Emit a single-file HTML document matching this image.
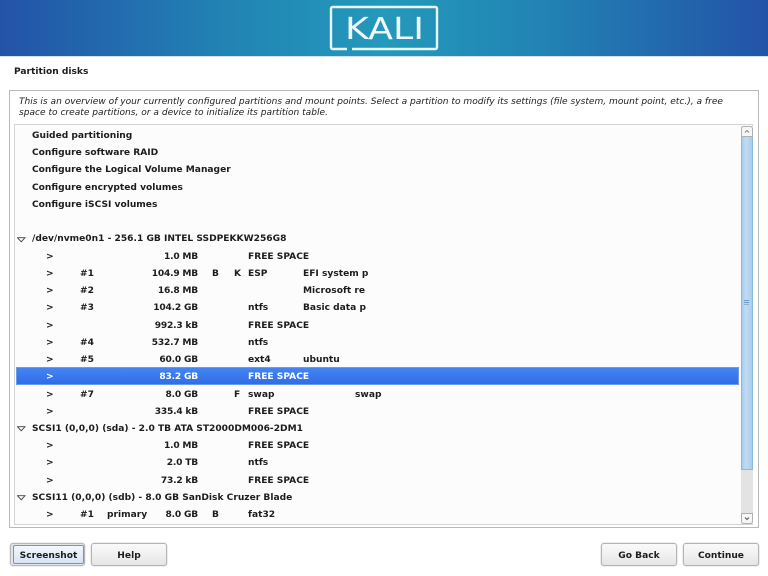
<!DOCTYPE html>
<html><head><meta charset="utf-8">
<style>
html,body{margin:0;padding:0}
body{width:768px;height:576px;overflow:hidden;background:#fff;position:relative;font-family:"DejaVu Sans",sans-serif;color:#1a1a1a}
#p{position:absolute;left:0;top:0;width:768px;height:576px;overflow:hidden;filter:blur(.35px)}
.b{position:absolute}
.r{position:absolute;left:16px;width:723px;height:17px;font-size:9.1px;font-weight:bold;line-height:17px;white-space:pre;color:#1c1c1c;margin-top:1.500px}
.r span{position:absolute;top:0}
.s{left:0;width:182px;text-align:right;letter-spacing:-.2px}
.a{left:30px}.n{left:64px}.f{left:232px}.m{left:287px}.x{left:339px}.t{left:16px}
.tri{position:absolute;left:1px;top:5.500px}
.btn{position:absolute;top:543px;height:23px;box-sizing:border-box;border:1px solid #b4b4b4;border-radius:3px;background:linear-gradient(#fafafa,#e6e6e6);text-align:center;font-size:9.1px;font-weight:bold;line-height:24px;color:#1c1c1c;box-shadow:0 0 0 .5px #ddd}
</style></head><body><div id="p">
<div class="b" style="left:0;top:0;width:768px;height:56px;background:linear-gradient(90deg,#2353a8 0%,#2284b4 30%,#2399bb 50%,#2284b4 70%,#2353a8 100%)"></div>
<div class="b" style="left:0;top:56px;width:768px;height:1px;background:#cfe0ee"></div>
<svg class="b" style="left:325px;top:2px" width="118" height="52" viewBox="0 0 118 52">
<path d="M22 47H7.500a1.500 1.500 0 0 1-1.500-1.500V6.500A1.500 1.500 0 0 1 7.500 5H110.500a1.500 1.500 0 0 1 1.500 1.500V45.500a1.500 1.500 0 0 1-1.500 1.500H27" fill="none" stroke="#e9f4f8" stroke-width="2.400"/>
<text x="20" y="37" font-family="DejaVu Sans,sans-serif" font-size="30" fill="#f2f8fa" textLength="79" lengthAdjust="spacingAndGlyphs">KALI</text>
</svg>

<div class="b" style="left:14px;top:66px;font-size:9.1px;font-weight:bold;line-height:12px;color:#1c1c1c">Partition disks</div>

<div class="b" style="left:9px;top:90px;width:750px;height:438px;box-sizing:border-box;border:1px solid #b8b8b8;background:#fff"></div>
<div class="b" style="left:19px;top:96.500px;font-size:9.07px;font-style:oblique;line-height:11.500px;color:#222;white-space:pre">This is an overview of your currently configured partitions and mount points. Select a partition to modify its settings (file system, mount point, etc.), a free
space to create partitions, or a device to initialize its partition table.</div>

<div class="b" style="left:14px;top:124px;width:739px;height:401px;box-sizing:border-box;border:1px solid #d4d4d4;background:#fcfcfc"></div>
<div class="b" style="left:16px;top:367px;width:723px;height:18px;box-sizing:border-box;background:linear-gradient(#4585f0,#2f6de8);border:1px solid #6a9ae8"></div>

<div class="r" style="top:126px"><span class="t">Guided partitioning</span></div>
<div class="r" style="top:143px"><span class="t">Configure software RAID</span></div>
<div class="r" style="top:160.500px"><span class="t">Configure the Logical Volume Manager</span></div>
<div class="r" style="top:178px"><span class="t">Configure encrypted volumes</span></div>
<div class="r" style="top:195px"><span class="t">Configure iSCSI volumes</span></div>

<div class="r" style="top:229.500px"><svg class="tri" width="10" height="7"><path d="M.5 .7H8L4.250 4.800Z" fill="none" stroke="#444" stroke-width=".9"/></svg><span class="t">/dev/nvme0n1 - 256.1 GB INTEL SSDPEKKW256G8</span></div>
<div class="r" style="top:247px"><span class="a">&gt;</span><span class="s">1.0 MB</span><span class="f">FREE SPACE</span></div>
<div class="r" style="top:264px"><span class="a">&gt;</span><span class="n">#1</span><span class="s">104.9 MB</span><span style="left:196px">B</span><span style="left:218px">K</span><span class="f">ESP</span><span class="m">EFI system p</span></div>
<div class="r" style="top:281.500px"><span class="a">&gt;</span><span class="n">#2</span><span class="s">16.8 MB</span><span class="m">Microsoft re</span></div>
<div class="r" style="top:298.500px"><span class="a">&gt;</span><span class="n">#3</span><span class="s">104.2 GB</span><span class="f">ntfs</span><span class="m">Basic data p</span></div>
<div class="r" style="top:316px"><span class="a">&gt;</span><span class="s">992.3 kB</span><span class="f">FREE SPACE</span></div>
<div class="r" style="top:333px"><span class="a">&gt;</span><span class="n">#4</span><span class="s">532.7 MB</span><span class="f">ntfs</span></div>
<div class="r" style="top:350.500px"><span class="a">&gt;</span><span class="n">#5</span><span class="s">60.0 GB</span><span class="f">ext4</span><span class="m">ubuntu</span></div>
<div class="r" style="top:367px;color:#fff"><span class="a">&gt;</span><span class="s">83.2 GB</span><span class="f">FREE SPACE</span></div>
<div class="r" style="top:385px"><span class="a">&gt;</span><span class="n">#7</span><span class="s">8.0 GB</span><span style="left:218px">F</span><span class="f">swap</span><span class="x">swap</span></div>
<div class="r" style="top:402px"><span class="a">&gt;</span><span class="s">335.4 kB</span><span class="f">FREE SPACE</span></div>
<div class="r" style="top:419px"><svg class="tri" width="10" height="7"><path d="M.5 .7H8L4.250 4.800Z" fill="none" stroke="#444" stroke-width=".9"/></svg><span class="t">SCSI1 (0,0,0) (sda) - 2.0 TB ATA ST2000DM006-2DM1</span></div>
<div class="r" style="top:436.500px"><span class="a">&gt;</span><span class="s">1.0 MB</span><span class="f">FREE SPACE</span></div>
<div class="r" style="top:453.500px"><span class="a">&gt;</span><span class="s">2.0 TB</span><span class="f">ntfs</span></div>
<div class="r" style="top:471px"><span class="a">&gt;</span><span class="s">73.2 kB</span><span class="f">FREE SPACE</span></div>
<div class="r" style="top:488px"><svg class="tri" width="10" height="7"><path d="M.5 .7H8L4.250 4.800Z" fill="none" stroke="#444" stroke-width=".9"/></svg><span class="t">SCSI11 (0,0,0) (sdb) - 8.0 GB SanDisk Cruzer Blade</span></div>
<div class="r" style="top:505.500px"><span class="a">&gt;</span><span class="n">#1</span><span style="left:91px">primary</span><span class="s">8.0 GB</span><span style="left:196px">B</span><span class="f">fat32</span></div>

<!-- scrollbar -->
<div class="b" style="left:741px;top:126px;width:12px;height:398px;background:#e3e3e3"></div>
<div class="b" style="left:741px;top:136px;width:12px;height:334px;box-sizing:border-box;border:1px solid #8cb8dc;background:linear-gradient(90deg,#a9cdec,#c0dcf4 40%,#a8cdec)"></div>
<div class="b" style="left:741px;top:126px;width:12px;height:11px;box-sizing:border-box;border:1px solid #b0b0b0;border-radius:3px 3px 0 0;background:#f6f6f6"></div>
<div class="b" style="left:741px;top:513px;width:12px;height:11px;box-sizing:border-box;border:1px solid #b0b0b0;border-radius:0 0 3px 3px;background:#f6f6f6"></div>
<svg class="b" style="left:741px;top:126px" width="12" height="11"><path d="M4 6.500L6 4.500L8 6.500" fill="none" stroke="#888" stroke-width="1"/></svg>
<svg class="b" style="left:741px;top:513px" width="12" height="11"><path d="M4 4.500L6 6.500L8 4.500" fill="none" stroke="#555" stroke-width="1"/></svg>
<div class="b" style="left:744px;top:300px;width:5px;height:1px;background:#6a9cc8"></div>
<div class="b" style="left:744px;top:302px;width:5px;height:1px;background:#6a9cc8"></div>
<div class="b" style="left:744px;top:304px;width:5px;height:1px;background:#8ab2d6"></div>

<div class="btn" style="left:10px;width:75px;border:1px solid #b8b8b8;padding:0;background:#e4e4e4"><div style="position:absolute;left:2px;top:1px;right:0;bottom:1px;border:1px solid #6f94cf;border-radius:2px;background:linear-gradient(#f4f8fe,#d6e4f6);line-height:20px;color:#1c1c1c">Screenshot</div></div>
<div class="btn" style="left:91px;width:76px">Help</div>
<div class="btn" style="left:601px;width:76px">Go Back</div>
<div class="btn" style="left:683px;width:76px">Continue</div>
</div></body></html>
